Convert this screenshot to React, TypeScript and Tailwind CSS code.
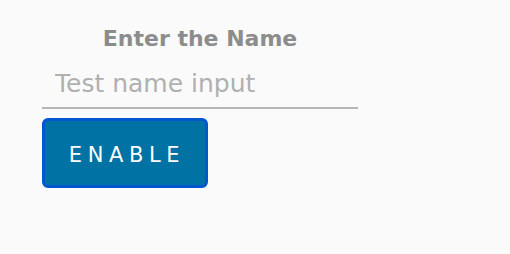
import React from "react";

export default function App() {
  return (
    <div className="w-full h-[254px] bg-[#fafafa] pl-[42px] pt-[23px] flex flex-col items-start" style={{ fontFamily: "'DejaVu Sans', sans-serif" }}>
      <div className="w-[316px] text-center font-bold text-[22px] leading-[32px] text-[#8c8c8c]">Enter the Name</div>
      <input
        className="w-[316px] h-[54px] pt-[5px] border-b-2 border-[#b5b5b5] bg-transparent px-[13px] text-[25px] text-[#555] placeholder-[#b0b0b0] outline-none"
        placeholder="Test name input"
      />
      <button className="mt-[9px] w-[166px] h-[70px] border-[3px] border-[#0057d0] bg-[#0072a3] rounded-[6px] text-white text-[21px] tracking-[5.6px] pt-[6px] pl-[4px] flex items-center justify-center">
        ENABLE
      </button>
    </div>
  );
}
